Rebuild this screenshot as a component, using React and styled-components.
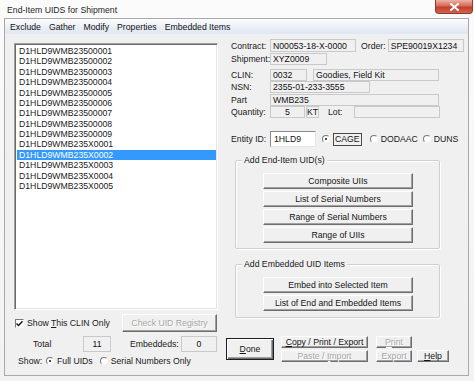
import React from 'react';
import styled, { createGlobalStyle } from 'styled-components';

const GlobalStyle = createGlobalStyle`
  html, body { margin: 0; padding: 0; background: #f4f4f4; }
  body {
    font-family: "Liberation Sans", Arial, sans-serif;
    font-size: 8.7px;
    color: #141414;
  }
  * { box-sizing: border-box; }
`;

const Window = styled.div`
  width: 474px;
  height: 381px;
  display: flex;
  flex-direction: column;
  background: linear-gradient(#fbfbfb, #f2f2f2);
  overflow: hidden;
`;

const TitleBar = styled.div`
  height: 18px;
  flex: none;
  display: flex;
  justify-content: space-between;
  padding-left: 7px;
`;

const Title = styled.span`
  align-self: center;
  margin-top: 2px;
  color: #1e1e1e;
`;

const CloseButton = styled.div`
  width: 38px;
  height: 14px;
  margin-right: 1px;
  border: 1px solid #8d3b2f;
  border-top: none;
  border-radius: 0 0 4px 4px;
  background: linear-gradient(#eab3a5, #d86a55 45%, #c23f2a 55%, #d4634c);
  display: flex;
  align-items: center;
  justify-content: center;
`;

const Frame = styled.div`
  flex: 1;
  display: flex;
  padding: 0 5px 5px 4px;
`;

const Client = styled.div`
  flex: 1;
  display: flex;
  flex-direction: column;
  border: 1px solid #a9a9a9;
  background: #f0f0f0;
`;

const MenuBar = styled.div`
  height: 16px;
  flex: none;
  display: flex;
  align-items: center;
  gap: 8px;
  padding-left: 5px;
  background: linear-gradient(#fbfcfe, #e9eef6 60%, #dfe7f2);
  border-bottom: 1px solid #eef2f7;
`;

const MenuItem = styled.span`
  color: #111;
`;

const Body = styled.div`
  flex: 1;
  display: flex;
  gap: 8px;
  padding-left: 9px;
`;

const LeftCol = styled.div`
  width: 204px;
  display: flex;
  flex-direction: column;
  padding-top: 8px;
`;

const ListBox = styled.div`
  height: 267px;
  background: #fff;
  border: 1px solid;
  border-color: #a0a0a0 #fff #fff #a0a0a0;
  box-shadow: inset 1px 1px #696969, inset -1px -1px #e3e3e3;
  padding: 2px 1px 0 2px;
`;

const ListItem = styled.div`
  height: 10.38px;
  line-height: 10.38px;
  padding-left: 2px;
  white-space: nowrap;
  background: ${(p) => (p.$selected ? '#3399ff' : 'transparent')};
  color: ${(p) => (p.$selected ? '#fff' : '#1a1a1a')};
`;

const Row = styled.div`
  display: flex;
  align-items: center;
  height: ${(p) => p.$h || 12}px;
  margin-top: ${(p) => p.$mt || 0}px;
  padding-left: ${(p) => p.$pl || 0}px;
  white-space: nowrap;
`;

const Label = styled.span`
  width: ${(p) => (p.$w ? `${p.$w}px` : 'auto')};
  margin-left: ${(p) => p.$ml || 0}px;
  flex: none;
  color: #1a1a1a;
`;

const Field = styled.div`
  width: ${(p) => p.$w}px;
  height: ${(p) => p.$h || 12}px;
  margin-left: ${(p) => p.$ml || 0}px;
  flex: none;
  border: 1px solid #c9c9c9;
  background: #f0f0f0;
  display: flex;
  align-items: center;
  justify-content: ${(p) => (p.$center ? 'center' : 'flex-start')};
  padding-left: ${(p) => (p.$center ? 0 : 2)}px;
  color: #111;
  overflow: visible;
`;

const TextInput = styled.div`
  width: 46px;
  height: 16px;
  background: #fff;
  border: 1px solid;
  border-color: #8a8a8a #e3e3e3 #e3e3e3 #8a8a8a;
  display: flex;
  align-items: center;
  padding-left: 3px;
  color: #111;
`;

const RadioDot = styled.span`
  width: 8px;
  height: 8px;
  flex: none;
  border-radius: 50%;
  border: 1px solid;
  border-color: #7a7a7a #f5f5f5 #f5f5f5 #7a7a7a;
  background: #fff;
  margin-left: ${(p) => p.$ml || 0}px;
  margin-right: ${(p) => p.$mr || 3}px;
  display: flex;
  align-items: center;
  justify-content: center;
  &::after {
    content: '';
    width: 2px;
    height: 2px;
    border-radius: 50%;
    background: ${(p) => (p.$checked ? '#111' : 'transparent')};
  }
`;

const FocusBox = styled.span`
  border: 1px solid #4a4a4a;
  padding: 1px 1px;
  line-height: 9px;
`;

const Check = styled.span`
  width: 9px;
  height: 9px;
  flex: none;
  background: #fff;
  border: 1px solid;
  border-color: #7a7a7a #f5f5f5 #f5f5f5 #7a7a7a;
  margin: 0 3px 0 1px;
  display: flex;
  align-items: center;
  justify-content: center;
`;

const Button = styled.button`
  font: inherit;
  font-size: 8.7px;
  width: ${(p) => p.$w}px;
  height: ${(p) => p.$h || 16}px;
  flex: none;
  padding: 0;
  margin-left: ${(p) => p.$ml || 0}px;
  margin-top: ${(p) => p.$mt || 0}px;
  background: #f0f0f0;
  color: ${(p) => (p.disabled ? '#a6a6a6' : '#141414')};
  text-shadow: ${(p) => (p.disabled ? '1px 1px #fff' : 'none')};
  border: 1px solid;
  border-color: ${(p) => (p.$default ? '#1e1e1e' : '#fff #6d6d6d #6d6d6d #fff')};
  box-shadow: ${(p) =>
    p.$default
      ? 'inset 1px 1px #fff, inset -1px -1px #6d6d6d, inset -2px -2px #a0a0a0'
      : 'inset -1px -1px #a0a0a0'};
  display: flex;
  align-items: center;
  justify-content: center;
  white-space: nowrap;
`;

const RightCol = styled.div`
  flex: 1;
  display: flex;
  flex-direction: column;
  padding-top: 4px;
`;

const Form = styled.div`
  display: flex;
  flex-direction: column;
  padding-left: 5px;
`;

const GroupBox = styled.div`
  margin: ${(p) => p.$mt}px 0 0 9px;
  width: 205px;
  padding: 0 0 ${(p) => p.$pb}px 27px;
  border: 1px solid #cfcfcf;
  border-radius: 2px;
  box-shadow: inset 1px 1px #fff, 1px 1px #fff;
  display: flex;
  flex-direction: column;
  gap: 2px;
`;

const Legend = styled.span`
  align-self: flex-start;
  margin: -6px 0 6px -21px;
  padding: 0 2px;
  line-height: 10px;
  background: #f0f0f0;
  color: #1a1a1a;
`;

const ButtonBar = styled.div`
  display: flex;
  margin-top: 18px;
`;

const ButtonStack = styled.div`
  display: flex;
  flex-direction: column;
  gap: 2px;
  margin-left: ${(p) => p.$ml}px;
`;

const items = [
  'D1HLD9WMB23500001',
  'D1HLD9WMB23500002',
  'D1HLD9WMB23500003',
  'D1HLD9WMB23500004',
  'D1HLD9WMB23500005',
  'D1HLD9WMB23500006',
  'D1HLD9WMB23500007',
  'D1HLD9WMB23500008',
  'D1HLD9WMB23500009',
  'D1HLD9WMB235X0001',
  'D1HLD9WMB235X0002',
  'D1HLD9WMB235X0003',
  'D1HLD9WMB235X0004',
  'D1HLD9WMB235X0005',
];

const App = () => {
  return (
    <>
      <GlobalStyle />
      <Window>
        <TitleBar>
          <Title>End-Item UIDS for Shipment</Title>
          <CloseButton>
            <svg width="9" height="8" viewBox="0 0 9 8">
              <path d="M1 1 L8 7 M8 1 L1 7" stroke="#fff" strokeWidth="2" strokeLinecap="square" />
            </svg>
          </CloseButton>
        </TitleBar>
        <Frame>
          <Client>
            <MenuBar>
              <MenuItem>Exclude</MenuItem>
              <MenuItem>Gather</MenuItem>
              <MenuItem>Modify</MenuItem>
              <MenuItem>Properties</MenuItem>
              <MenuItem>Embedded Items</MenuItem>
            </MenuBar>
            <Body>
              <LeftCol>
                <ListBox>
                  {items.map((it, i) => (
                    <ListItem key={it} $selected={i === 10}>
                      {it}
                    </ListItem>
                  ))}
                </ListBox>
                <Row $h={18} $mt={4}>
                  <Check>
                    <svg width="7" height="7" viewBox="0 0 7 7">
                      <path d="M0.5 3.5 L2.5 5.5 L6.5 1.2" stroke="#111" strokeWidth="1.4" fill="none" />
                    </svg>
                  </Check>
                  <Label>
                    Show <u>T</u>his CLIN Only
                  </Label>
                  <Button disabled $w={95} $h={18} style={{ marginLeft: 'auto', marginRight: 1 }}>
                    Check UID Registry
                  </Button>
                </Row>
                <Row $h={16} $mt={4} $pl={19}>
                  <Label $w={50}>Total</Label>
                  <Field $w={28} $h={16} $center>
                    11
                  </Field>
                  <Label $ml={19}>Embeddeds:</Label>
                  <Field $w={36} $h={16} $center style={{ marginLeft: 'auto', marginRight: 1 }}>
                    0
                  </Field>
                </Row>
                <Row $h={14} $mt={2} $pl={4}>
                  <Label $w={28}>Show:</Label>
                  <RadioDot $checked />
                  <Label>Full UIDs</Label>
                  <RadioDot $ml={7} />
                  <Label>Serial Numbers Only</Label>
                </Row>
              </LeftCol>
              <RightCol>
                <Form>
                  <Row $h={13}>
                    <Label $w={39}>Contract:</Label>
                    <Field $w={86} $h={13}>N00053-18-X-0000</Field>
                    <Label $ml={5}>Order:</Label>
                    <Field $w={76} $h={13} $ml={2}>SPE90019X1234</Field>
                  </Row>
                  <Row $mt={1}>
                    <Label $w={39}>Shipment:</Label>
                    <Field $w={57}>XYZ0009</Field>
                  </Row>
                  <Row $mt={4}>
                    <Label $w={39}>CLIN:</Label>
                    <Field $w={37}>0032</Field>
                    <Field $w={126} $ml={6}>
                      Goodies, Field Kit
                    </Field>
                  </Row>
                  <Row>
                    <Label $w={39}>NSN:</Label>
                    <Field $w={100}>2355-01-233-3555</Field>
                  </Row>
                  <Row $mt={1}>
                    <Label $w={39}>Part</Label>
                    <Field $w={169}>WMB235</Field>
                  </Row>
                  <Row>
                    <Label $w={39}>Quantity:</Label>
                    <Field $w={35} $center>
                      5
                    </Field>
                    <Field $w={13} $ml={1} $center>
                      KT
                    </Field>
                    <Label $w={26} $ml={9}>
                      Lot:
                    </Label>
                    <Field $w={86} />
                  </Row>
                  <Row $h={16} $mt={13}>
                    <Label $w={39}>Entity ID:</Label>
                    <TextInput>1HLD9</TextInput>
                    <RadioDot $checked $ml={6} />
                    <FocusBox>CAGE</FocusBox>
                    <RadioDot $ml={8} />
                    <Label>DODAAC</Label>
                    <RadioDot $ml={5} />
                    <Label>DUNS</Label>
                  </Row>
                </Form>
                <GroupBox $mt={13} $pb={5}>
                  <Legend>Add End-Item UID(s)</Legend>
                  <Button $w={150}>Composite UIIs</Button>
                  <Button $w={150}>List of Serial Numbers</Button>
                  <Button $w={150}>Range of Serial Numbers</Button>
                  <Button $w={150}>Range of UIIs</Button>
                </GroupBox>
                <GroupBox $mt={15} $pb={6}>
                  <Legend>Add Embedded UID Items</Legend>
                  <Button $w={150}>Embed into Selected Item</Button>
                  <Button $w={150}>List of End and Embedded Items</Button>
                </GroupBox>
                <ButtonBar>
                  <Button $default $w={48} $h={22} $mt={2}>
                    <span>
                      <u>D</u>one
                    </span>
                  </Button>
                  <ButtonStack $ml={7}>
                    <Button $w={87} $h={12}>
                      <span>
                        <u>C</u>opy / Print / Export
                      </span>
                    </Button>
                    <Button disabled $w={87} $h={12}>
                      <span>
                        Paste / <u>I</u>mport
                      </span>
                    </Button>
                  </ButtonStack>
                  <ButtonStack $ml={8}>
                    <Button disabled $w={36} $h={12}>
                      <span>
                        <u>P</u>rint
                      </span>
                    </Button>
                    <Button disabled $w={36} $h={12}>
                      Export
                    </Button>
                  </ButtonStack>
                  <Button $w={32} $h={12} $ml={5} $mt={14}>
                    <span>
                      <u>H</u>elp
                    </span>
                  </Button>
                </ButtonBar>
              </RightCol>
            </Body>
          </Client>
        </Frame>
      </Window>
    </>
  );
};

export default App;
